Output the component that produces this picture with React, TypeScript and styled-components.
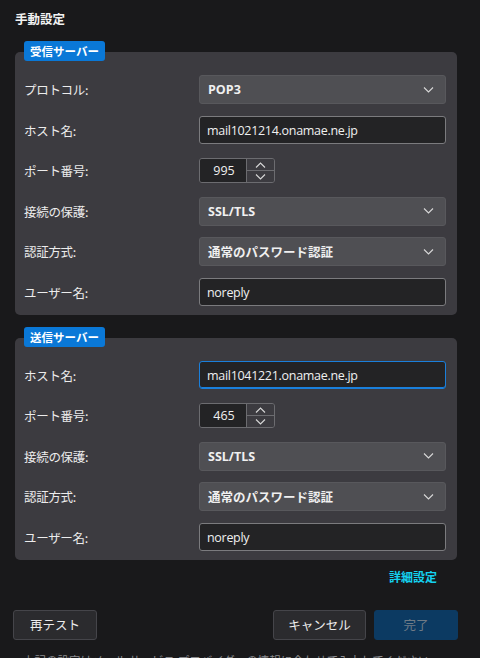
import React from "react";
import styled, { createGlobalStyle, css } from "styled-components";

const GlobalStyle = createGlobalStyle`
  html, body {
    margin: 0;
    padding: 0;
    background: #19191b;
    overflow: hidden;
  }
  body {
    font-family: "Open Sans", "Noto Sans CJK JP", sans-serif;
    color: #ececec;
  }
`;

type Field =
  | { kind: "select"; label: string; value: string; bold?: boolean }
  | { kind: "input"; label: string; value: string; focused?: boolean }
  | { kind: "spin"; label: string; value: string };

const incoming: Field[] = [
  { kind: "select", label: "プロトコル:", value: "POP3" },
  { kind: "input", label: "ホスト名:", value: "mail1021214.onamae.ne.jp" },
  { kind: "spin", label: "ポート番号:", value: "995" },
  { kind: "select", label: "接続の保護:", value: "SSL/TLS" },
  { kind: "select", label: "認証方式:", value: "通常のパスワード認証" },
  { kind: "input", label: "ユーザー名:", value: "noreply" },
];

const outgoing: Field[] = [
  { kind: "input", label: "ホスト名:", value: "mail1041221.onamae.ne.jp", focused: true },
  { kind: "spin", label: "ポート番号:", value: "465" },
  { kind: "select", label: "接続の保護:", value: "SSL/TLS" },
  { kind: "select", label: "認証方式:", value: "通常のパスワード認証" },
  { kind: "input", label: "ユーザー名:", value: "noreply" },
];

const Chevron = ({ up }: { up?: boolean }) => (
  <svg width="11" height="6" viewBox="0 0 11 6" fill="none">
    <path
      d={up ? "M1 5.5 L5.5 1 L10 5.5" : "M1 0.5 L5.5 5 L10 0.5"}
      stroke="#d8d8d8"
      strokeWidth="1.1"
    />
  </svg>
);

const renderControl = (f: Field) => {
  if (f.kind === "select") {
    return (
      <Select>
        <span>{f.value}</span>
        <Chevron />
      </Select>
    );
  }
  if (f.kind === "spin") {
    return (
      <Spin>
        <SpinValue>{f.value}</SpinValue>
        <SpinButtons>
          <SpinButton>
            <Chevron up />
          </SpinButton>
          <SpinButton>
            <Chevron />
          </SpinButton>
        </SpinButtons>
      </Spin>
    );
  }
  return <Input $focused={f.focused}>{f.value}</Input>;
};

const Section = ({ title, fields, top }: { title: string; fields: Field[]; top: number }) => (
  <SectionWrap $top={top}>
    <Badge>{title}</Badge>
    <Panel>
      {fields.map((f, i) => (
        <Row key={i}>
          <Label>{f.label}</Label>
          {renderControl(f)}
        </Row>
      ))}
    </Panel>
  </SectionWrap>
);

export default function App() {
  return (
    <>
      <GlobalStyle />
      <Page>
        <Title>手動設定</Title>
        <Section title="受信サーバー" fields={incoming} top={12} />
        <Section title="送信サーバー" fields={outgoing} top={12} />
        <LinkRow>
          <Link>詳細設定</Link>
        </LinkRow>
        <Footer>
          <Button>再テスト</Button>
          <Spacer />
          <Button $wide>キャンセル</Button>
          <Button $primary>完了</Button>
        </Footer>
        <Note>上記の設定はメール サービス プロバイダーの情報に合わせて入力してください。</Note>
      </Page>
    </>
  );
}

const Page = styled.div`
  width: 480px;
  height: 658px;
  box-sizing: border-box;
  padding: 9px 23px 0 15px;
  display: flex;
  flex-direction: column;
`;

const Title = styled.div`
  font-family: "Noto Sans CJK JP", sans-serif;
  font-size: 12.5px;
  font-weight: 700;
  color: #f2f2f2;
  line-height: 20px;
`;

const SectionWrap = styled.div<{ $top: number }>`
  display: flex;
  flex-direction: column;
  margin-top: ${(p) => p.$top}px;
`;

const Badge = styled.div`
  align-self: flex-start;
  margin-left: 9px;
  margin-bottom: -9px;
  position: relative;
  z-index: 1;
  background: #0a78d7;
  color: #ffffff;
  font-family: "Noto Sans CJK JP", sans-serif;
  font-size: 11.5px;
  font-weight: 700;
  line-height: 20px;
  height: 20px;
  padding: 0 6px;
  border-radius: 3px;
`;

const Panel = styled.div`
  background: #3c3b40;
  border-radius: 5px;
  padding: 23px 11px 8px 9px;
  display: flex;
  flex-direction: column;
  gap: 11.5px;
`;

const Row = styled.div`
  display: grid;
  grid-template-columns: 175px 1fr;
  align-items: center;
  height: 29px;
`;

const Label = styled.div`
  font-family: "Noto Sans CJK JP", sans-serif;
  font-size: 12.5px;
  color: #ececec;
  letter-spacing: -0.3px;
`;

const controlText = css`
  font-size: 12.5px;
  color: #f0f0f0;
  box-sizing: border-box;
`;

const Select = styled.div`
  ${controlText};
  height: 29px;
  background: #4f4f53;
  border: 1px solid #58585c;
  border-radius: 3px;
  display: flex;
  align-items: center;
  justify-content: space-between;
  padding: 0 11px 0 8px;
  font-weight: 700;
`;

const Input = styled.div<{ $focused?: boolean }>`
  ${controlText};
  height: 28px;
  background: #232325;
  border: 1px solid ${(p) => (p.$focused ? "#1a7fdb" : "#7b7b7e")};
  ${(p) => p.$focused && "box-shadow: inset 0 -1px 0 #1a7fdb;"}
  border-radius: 3px;
  display: flex;
  align-items: center;
  padding: 0 7px;
  letter-spacing: -0.3px;
`;

const Spin = styled.div`
  ${controlText};
  height: 25px;
  width: 76px;
  display: flex;
  border: 1px solid #6c6c70;
  border-radius: 3px;
  overflow: hidden;
`;

const SpinValue = styled.div`
  flex: 1;
  background: #232325;
  display: flex;
  align-items: center;
  justify-content: center;
  padding-left: 2px;
`;

const SpinButtons = styled.div`
  width: 27px;
  display: flex;
  flex-direction: column;
  border-left: 1px solid #6c6c70;
  background: #3c3b40;
`;

const SpinButton = styled.div`
  flex: 1;
  display: flex;
  align-items: center;
  justify-content: center;
  & + & {
    border-top: 1px solid #6c6c70;
  }
`;

const LinkRow = styled.div`
  display: flex;
  justify-content: flex-end;
  padding: 8px 20px 0 0;
`;

const Link = styled.span`
  font-family: "Noto Sans CJK JP", sans-serif;
  font-size: 12px;
  font-weight: 700;
  color: #14d2f0;
  line-height: 18px;
`;

const Footer = styled.div`
  display: flex;
  align-items: center;
  gap: 8px;
  margin: 24px -1px 0 -2px;
`;

const Spacer = styled.div`
  flex: 1;
`;

const Button = styled.div<{ $primary?: boolean; $wide?: boolean }>`
  font-family: "Noto Sans CJK JP", sans-serif;
  font-size: 12.5px;
  height: 30px;
  box-sizing: border-box;
  width: ${(p) => (p.$wide ? "93px" : "84px")};
  border-radius: 3px;
  display: flex;
  align-items: center;
  justify-content: center;
  background: ${(p) => (p.$primary ? "#0c3a62" : "#2b2b2e")};
  border: 1px solid ${(p) => (p.$primary ? "#0c3a62" : "#45454a")};
  color: ${(p) => (p.$primary ? "#6f7b86" : "#ececec")};
`;

const Note = styled.div`
  font-family: "Noto Sans CJK JP", sans-serif;
  font-size: 11.5px;
  color: #8a8a8e;
  margin-top: 12px;
  padding-left: 8px;
  white-space: nowrap;
`;
